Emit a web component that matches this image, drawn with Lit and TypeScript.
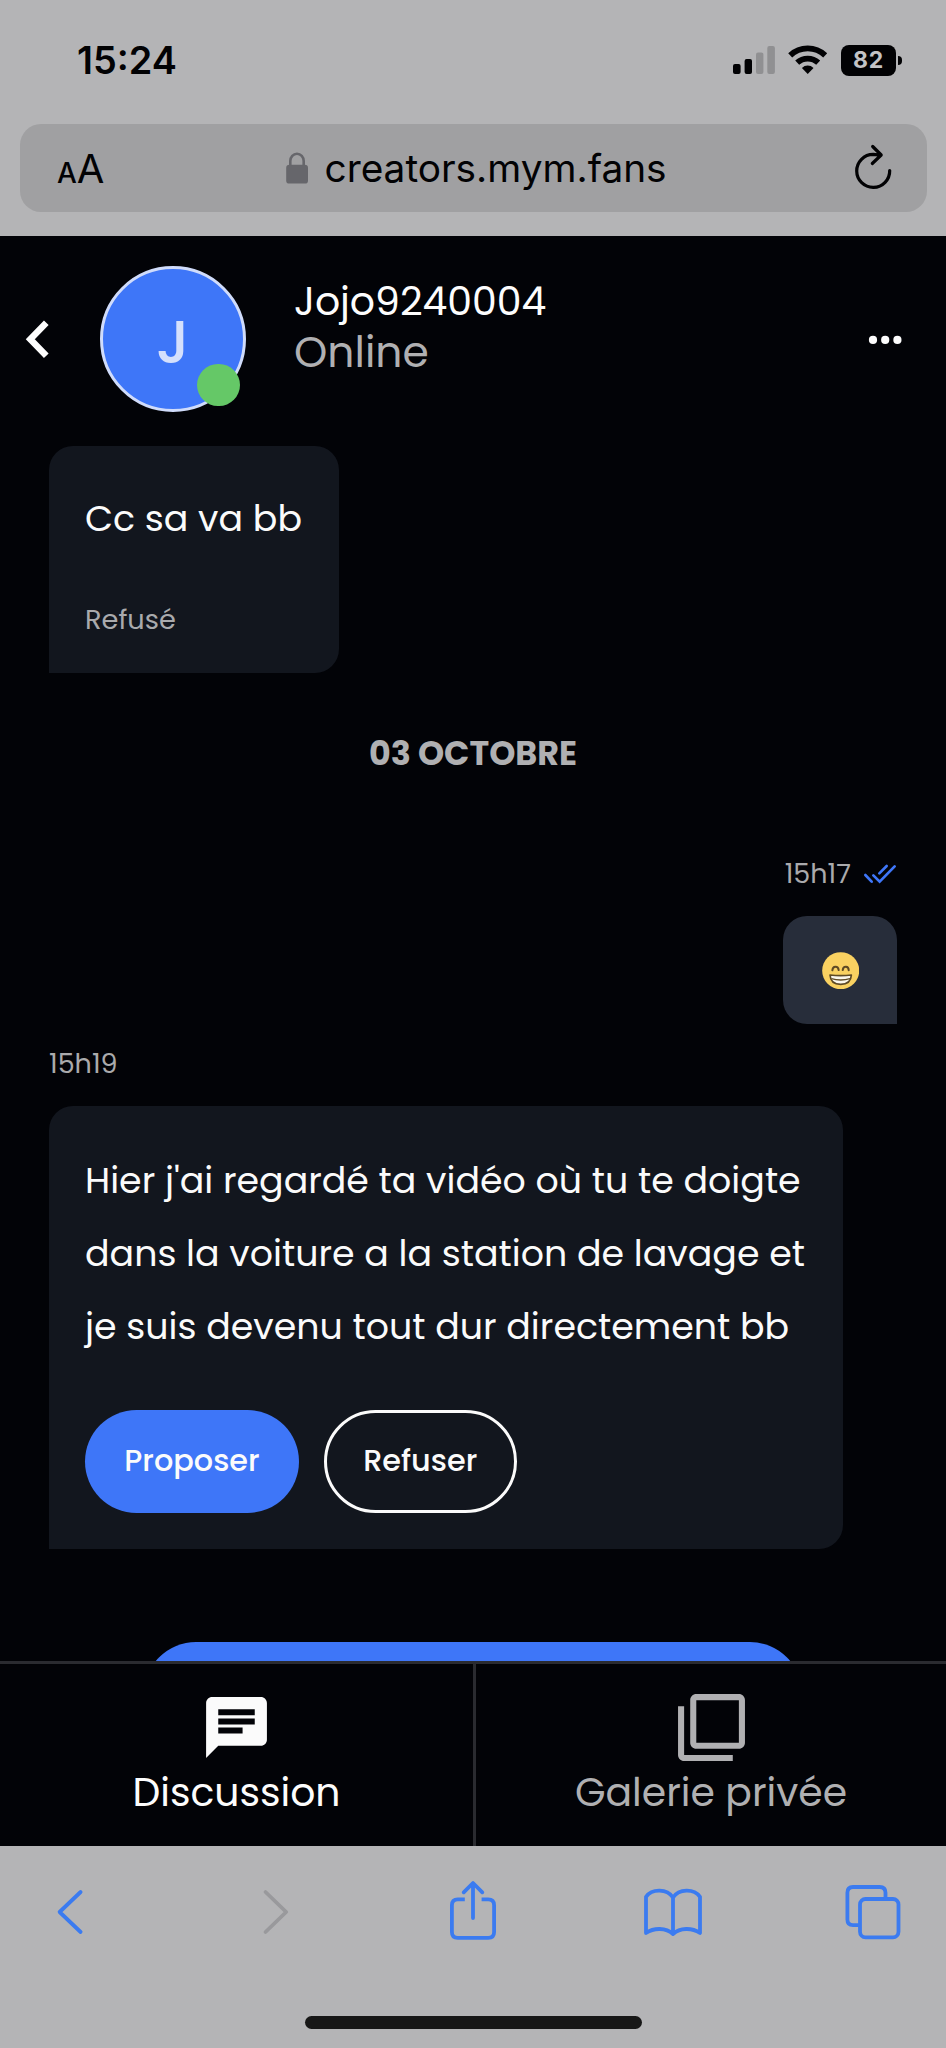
import { LitElement, html, css, svg } from "lit";
import { customElement } from "lit/decorators.js";

const lines = [
  "Hier j'ai regardé ta vidéo où tu te doigte",
  "dans la voiture a la station de lavage et",
  "je suis devenu tout dur directement bb",
];

/* iOS status bar and Safari address field */
@customElement("browser-top")
export class BrowserTop extends LitElement {
  static styles = css`
    :host { display: block; height: 236px; background: #b4b4b6; color: #020204; font-family: Inter, sans-serif; }
    svg { display: block; flex: none; }
    .status { display: flex; align-items: center; height: 120px; padding: 0 44px 0 77px; box-sizing: border-box; }
    .time { font-size: 37.8px; font-weight: 600; line-height: 46px; flex: 1; }
    .wifi { margin-left: 13px; }
    .battery { margin-left: 13px; display: flex; align-items: center; }
    .level { width: 55px; height: 31px; border-radius: 8px; background: #020204; color: #c3c3c5;
      font-size: 23px; font-weight: 700; line-height: 31px; text-align: center; letter-spacing: 0.8px; }
    .nub { width: 4px; height: 9px; margin-left: 2px; border-radius: 0 4px 4px 0; background: #020204; }
    .field { display: flex; align-items: center; height: 88px; margin: 4px 19.5px 0 20px; padding: 0 33px 0 37px;
      box-sizing: border-box; border-radius: 21px; background: #a0a0a2; }
    .aa { width: 229px; display: flex; align-items: baseline; line-height: 48px; padding-top: 5px; box-sizing: border-box; }
    .small { font-size: 28px; font-weight: 500; letter-spacing: -1px; }
    .large { font-size: 40px; letter-spacing: -1px; margin-left: 1px; }
    .url { font-size: 38.8px; line-height: 46px; margin: 0 0 1px 16.5px; flex: 1; }
  `;
  render() {
    return html`
      <div class="status">
        <span class="time">15:24</span>
        <svg width="42" height="28" viewBox="733 46 42 28">
          <rect x="733" y="64" width="7.6" height="10" rx="2" fill="#020204"/>
          <rect x="744.6" y="59" width="7.4" height="15" rx="2" fill="#020204"/>
          <rect x="756" y="52.4" width="7.4" height="21.6" rx="2" fill="#909092"/>
          <rect x="767.3" y="46" width="7.6" height="28" rx="2" fill="#909092"/>
        </svg>
        <svg class="wifi" width="40" height="30" viewBox="788 44.5 40 30" fill="none" stroke="#020204" stroke-width="5.8">
          <path d="M790.2 54.8A25.5 25.5 0 0 1 825.2 54.8M797.2 62.2A15.3 15.3 0 0 1 818.2 62.2"/>
          <path stroke="none" fill="#020204" d="M807.7 73.6L801.9 67.4A8.4 8.4 0 0 1 813.5 67.4Z"/>
        </svg>
        <span class="battery"><span class="level">82</span><span class="nub"></span></span>
      </div>
      <div class="field">
        <span class="aa"><span class="small">A</span><span class="large">A</span></span>
        <svg width="22" height="32" viewBox="286 151.5 22 32">
          <rect x="286.2" y="164.3" width="21.8" height="18.8" rx="3.2" fill="#66666b"/>
          <path d="M290.3 165V160.5a6.7 7.2 0 0 1 13.4 0V165" fill="none" stroke="#66666b" stroke-width="2.6"/>
        </svg>
        <span class="url">creators.mym.fans</span>
        <svg width="40" height="48" viewBox="854 143.5 40 48" fill="none" stroke="#020204" stroke-width="3.2" stroke-linecap="round" stroke-linejoin="round">
          <path d="M889.7 170A16.5 16.5 0 1 1 873.2 153.9L880.5 154.6M872.7 146L881.2 154.5L872.3 163"/>
        </svg>
      </div>`;
  }
}

@customElement("chat-header")
export class ChatHeader extends LitElement {
  static styles = css`
    :host { display: flex; align-items: center; height: 206px; padding: 0 40px 0 24px; box-sizing: border-box; }
    svg { display: block; flex: none; }
    .avatar { position: relative; width: 146px; height: 146px; margin-left: 50px; box-sizing: border-box;
      border: 3px solid #d0dcfb; border-radius: 50%; background: #3e76f8; color: #d5e0fc;
      font-size: 60px; font-weight: 500; line-height: 146px; text-align: center; flex: none; }
    .online { position: absolute; left: 94px; top: 94.5px; width: 42.5px; height: 42.5px; border-radius: 50%; background: #65c867; }
    .who { flex: 1; margin: 0 0 25px 48px; }
    .name { color: #fdfdfd; font-size: 39.4px; line-height: 51px; }
    .state { color: #b0b0b2; font-size: 42.4px; line-height: 50px; }
  `;
  render() {
    return html`
      <svg width="26" height="42" viewBox="24.5 318.500 26 42" fill="none" stroke="#fdfdfd" stroke-width="6.5">
        <path d="M46.8 323.3L30.8 339.8L46.8 356.3"/>
      </svg>
      <div class="avatar">J<span class="online"></span></div>
      <div class="who"><div class="name">Jojo9240004</div><div class="state">Online</div></div>
      <svg width="40" height="12" viewBox="866 334 40 12" fill="#fdfdfd">
        <circle cx="873" cy="340.900" r="4.1"/><circle cx="885.2" cy="340.900" r="4.1"/><circle cx="897.4" cy="340.900" r="4.1"/>
      </svg>`;
  }
}

@customElement("chat-thread")
export class ChatThread extends LitElement {
  static styles = css`
    :host { display: flex; flex-direction: column; padding: 3.5px 49px 0; overflow: hidden; box-sizing: border-box; color: #fbfbfb; }
    svg { display: block; flex: none; }
    .bubble { box-sizing: border-box; padding: 36.5px 36px; background: #12161e; border-radius: 24px 24px 24px 0; flex: none; }
    .text { font-size: 36.36px; line-height: 73px; white-space: nowrap; }
    .first { width: 290px; height: 227.5px; }
    .refused { margin-top: 44px; font-size: 27.2px; line-height: 41px; color: #a9aaad; }
    .date { margin-top: 57px; font-size: 33.3px; font-weight: 700; line-height: 48px; text-align: center; color: #b0b0b2; }
    .time { font-size: 27px; line-height: 40px; color: #aaaaac; }
    .sent { display: flex; align-items: center; gap: 12px; align-self: flex-end; margin-top: 75.5px; }
    .mine { align-self: flex-end; display: flex; align-items: center; justify-content: center; width: 114.5px; height: 108.5px;
      margin-top: 22.2px; padding: 1px 0 0 2px; background: #272d3a; border-radius: 24px 24px 0 24px; }
    .received { margin-top: 19.8px; }
    .request { width: 794px; height: 443.5px; margin-top: 22px; padding-top: 38px; }
    .actions { display: flex; gap: 24.5px; margin-top: 47.5px; }
    .btn { box-sizing: border-box; height: 103px; border-radius: 52px; border: 0; font: 500 30.3px/102px Poppins, sans-serif;
      color: #fbfbfb; background: #3e76f8; text-align: center; width: 214px; }
    .ghost { width: 193.5px; background: none; border: 3px solid #fbfbfb; line-height: 96px; }
    .cta { flex: none; height: 104px; margin: 93px 95px 0 95px; border-radius: 52px; background: #3e76f8; }
  `;
  render() {
    return html`
      <div class="bubble first">
        <div class="text">Cc sa va bb</div>
        <div class="refused">Refusé</div>
      </div>
      <div class="date">03 OCTOBRE</div>
      <div class="sent">
        <span class="time">15h17</span>
        <svg width="34" height="20" viewBox="790 488 102 60" fill="none" stroke="#3e76f8" stroke-width="8" stroke-linecap="round">
          <path d="M821 522L840 541L885 495M797 521L816 541M839 516L861 494"/>
        </svg>
      </div>
      <div class="bubble mine">
        <svg width="37.4" height="37.4" viewBox="668 755 112 112">
          <circle cx="724" cy="811" r="55.5" fill="#f9d161"/>
          <g fill="none" stroke="#5e4a25" stroke-width="6" stroke-linecap="round">
            <path d="M699 810C700 796 716 795 718 809M730 809C732 795 748 796 748 810"/>
          </g>
          <path d="M692 824Q724 828 756 824C755 842 744 852 724 852S693 842 692 824Z" fill="#fbf7ec" stroke="#5e4a25" stroke-width="5" stroke-linejoin="round"/>
          <path d="M696 835Q724 843 752 835" fill="none" stroke="#5e4a25" stroke-width="4"/>
        </svg>
      </div>
      <div class="time received">15h19</div>
      <div class="bubble request">
        ${lines.map((l) => html`<div class="text">${l}</div>`)}
        <div class="actions">
          <div class="btn">Proposer</div>
          <div class="btn ghost">Refuser</div>
        </div>
      </div>
      <div class="cta"></div>`;
  }
}

@customElement("chat-tabs")
export class ChatTabs extends LitElement {
  static styles = css`
    :host { display: flex; height: 184.5px; box-sizing: border-box; border-top: 3px solid #2a2b30; background: #020307; }
    .tab { flex: 1; display: flex; flex-direction: column; align-items: center; padding-top: 27px; color: #b0b0b2;
      fill: #b0b0b2; font-size: 39.3px; line-height: 58px; }
    .active { flex: none; width: 473px; color: #fdfdfd; fill: #fbfbfb; border-right: 3px solid #2a2b30; }
    svg { display: block; }
  `;
  render() {
    return html`
      <div class="tab active">
        <svg width="73" height="73" viewBox="0 0 24 24"><path d="M20 2H4c-1.1 0-1.99.9-1.99 2L2 22l4-4h14c1.1 0 2-.9 2-2V4c0-1.100-.9-2-2-2zM6 9h12v2H6V9zm8 5H6v-2h8v2zm4-6H6V6h12v2z"/></svg>
        <span>Discussion</span>
      </div>
      <div class="tab">
        <svg width="73" height="73" viewBox="0 0 24 24"><path d="M3 5H1v16c0 1.100.9 2 2 2h16v-2H3V5zm18-4H7c-1.100 0-2 .9-2 2v14c0 1.100.9 2 2 2h14c1.100 0 2-.9 2-2V3c0-1.100-.9-2-2-2zm0 16H7V3h14v14z"/></svg>
        <span>Galerie privée</span>
      </div>`;
  }
}

/* Safari toolbar: all glyphs share one coordinate space, one column each */
const tools = [
  { x: 0, w: 172, tone: "on", art: svg`<path d="M80.600 1892L59.600 1912L80.600 1932"/>` },
  { x: 172, w: 203, tone: "off", art: svg`<path d="M265.500 1892L286.200 1912L265.500 1932"/>` },
  { x: 375, w: 200, tone: "on", art: svg`<path d="M464.800 1899.300H457.800Q451.900 1899.300 451.900 1905.200V1932Q451.900 1937.900 457.800 1937.900H488.200Q494.100 1937.900 494.100 1932V1905.200Q494.100 1899.300 488.200 1899.300H481.600" stroke-linecap="butt"/><path d="M473 1918V1883.300M463.700 1892.300L473 1883L482.300 1892.300"/>` },
  { x: 575, w: 200, tone: "on", art: svg`<path d="M673 1897.500C667 1888.500 652 1888.500 646 1896.800V1933C654 1927.500 666 1927.500 673 1934C680 1927.500 692 1927.500 700 1933V1896.800C694 1888.500 679 1888.500 673 1897.500V1934"/>` },
  { x: 775, w: 171, tone: "on", art: svg`<rect x="860" y="1899" width="38.500" height="38.300" rx="5.500"/><path d="M860 1925.200H853Q847.400 1925.200 847.400 1919.500V1892.700Q847.400 1887 853 1887H879.700Q885.500 1887 885.500 1892.700V1899" stroke-linecap="butt"/>` },
];

@customElement("browser-toolbar")
export class BrowserToolbar extends LitElement {
  static styles = css`
    :host { display: flex; flex-direction: column; align-items: center; height: 202.5px; background: #b4b4b6; }
    .row { display: flex; width: 946px; padding-top: 14.5px; }
    svg { display: block; fill: none; stroke-width: 3.8; stroke-linecap: round; stroke-linejoin: round; }
    .on { stroke: #3b7bf0; }
    .off { stroke: #99999c; }
    .home { width: 337px; height: 12.5px; margin-top: 56px; border-radius: 7px; background: #171717; }
  `;
  render() {
    return html`
      <div class="row">
        ${tools.map((t) => html`<svg class=${t.tone} width=${t.w} height="100" viewBox="${t.x} 1860 ${t.w} 100">${t.art}</svg>`)}
      </div>
      <div class="home"></div>`;
  }
}

@customElement("app-root")
export class AppRoot extends LitElement {
  static styles = css`
    :host { display: flex; flex-direction: column; width: 946px; height: 2048px; overflow: hidden;
      background: #020307; font-family: Poppins, "Open Sans", sans-serif; }
    browser-top, chat-header, chat-tabs, browser-toolbar { flex: none; }
    chat-thread { flex: 1; min-height: 0; }
  `;
  render() {
    return html`
      <browser-top></browser-top>
      <chat-header></chat-header>
      <chat-thread></chat-thread>
      <chat-tabs></chat-tabs>
      <browser-toolbar></browser-toolbar>`;
  }
}
